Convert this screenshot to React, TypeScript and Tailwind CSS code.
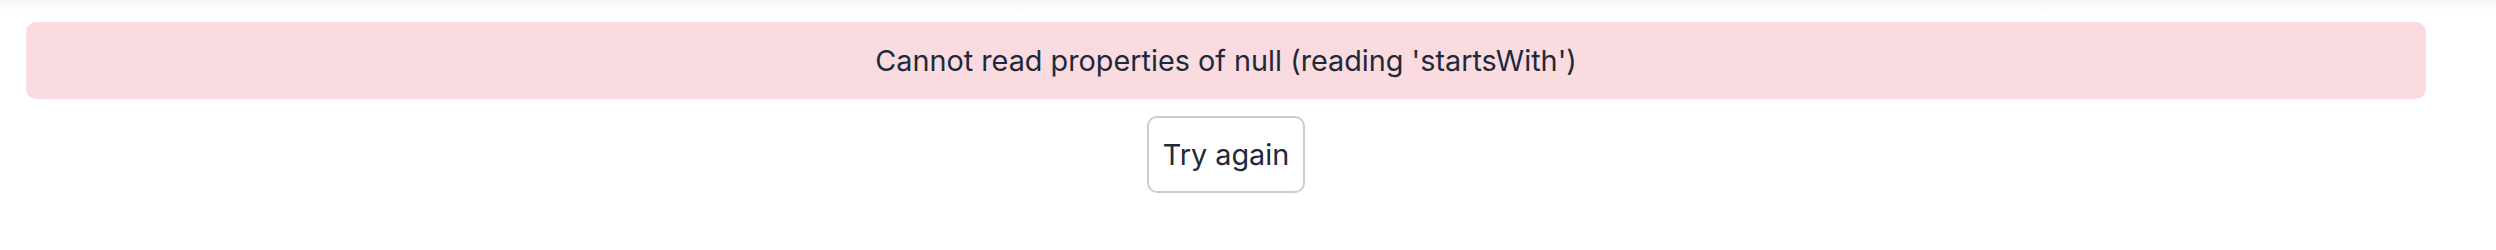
export default function App() {
    return (
        <div className="min-h-[250px] w-full bg-white font-['Inter',sans-serif] text-[#1e293b]">
            <div className="h-[12px] bg-linear-to-b from-[#f6f6f6] to-white" />
            <div className="pl-[26px] pr-[70px] pt-[10px]">
                <div className="flex h-[77px] items-center justify-center rounded-[10px] bg-[#fadbe0] text-[28.8px]">
                    Cannot read properties of null (reading 'startsWith')
                </div>
                <div className="mt-[17px] flex justify-center">
                    <button
                        className="h-[77px] w-[158px] rounded-[10px] border-2 border-[#c8cdd8] bg-white text-[28.8px] text-[#1e293b]"
                        type="button"
                    >
                        Try again
                    </button>
                </div>
            </div>
        </div>
    );
}
